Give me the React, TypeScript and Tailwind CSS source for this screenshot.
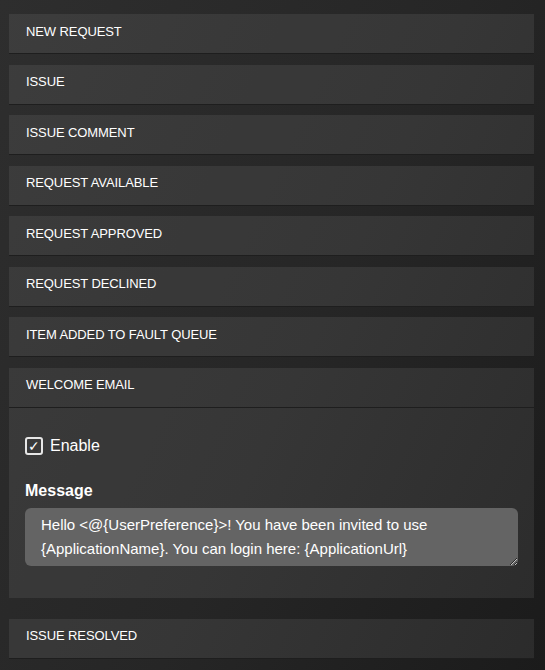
const items = [
    'New Request',
    'Issue',
    'Issue Comment',
    'Request Available',
    'Request Approved',
    'Request Declined',
    'Item Added To Fault Queue',
];

function PanelHeader({ title }: { title: string }) {
    return (
        <div className="h-[40px] flex items-center px-[17px] pb-[4px] border-b border-[#1e1e1e]">
            <span className="text-[13px] text-white uppercase tracking-[-0.1px]">{title}</span>
        </div>
    );
}

export default function App() {
    return (
        <div
            className="w-[545px] h-[670px] overflow-hidden bg-[linear-gradient(115deg,#2e2e2e_0%,#262626_55%,#1b1b1b_100%)] pl-[9px] pr-[11px] pt-[14px]"
            style={{ fontFamily: '"Liberation Sans", Arial, sans-serif' }}
        >
            {items.map((title) => (
                <div key={title} className="bg-white/[0.075] mb-[10.5px]">
                    <PanelHeader title={title} />
                </div>
            ))}

            <div className="bg-white/[0.075] mb-[21px]">
                <PanelHeader title="Welcome Email" />
                <div className="h-[190px] px-[16px] pt-[26px]">
                    <label className="flex items-center gap-[7px]">
                        <span className="w-[18px] h-[18px] border-2 border-[#e6e6e6] rounded-[3px] flex items-center justify-center text-white text-[14px] leading-none">
                            ✓
                        </span>
                        <span className="text-[16px] text-white">Enable</span>
                    </label>
                    <div className="mt-[21px] text-[16px] font-bold text-white">Message</div>
                    <textarea
                        readOnly
                        className="mt-[5px] block w-full h-[58px] bg-[#646464] rounded-[6px] px-[16px] py-[5px] text-[15px] leading-[24px] text-white outline-none resize-y"
                        style={{ fontFamily: '"Liberation Sans", Arial, sans-serif' }}
                        value="Hello <@{UserPreference}>! You have been invited to use {ApplicationName}. You can login here: {ApplicationUrl}"
                    />
                </div>
            </div>

            <div className="bg-white/[0.075]">
                <PanelHeader title="Issue Resolved" />
            </div>
        </div>
    );
}
